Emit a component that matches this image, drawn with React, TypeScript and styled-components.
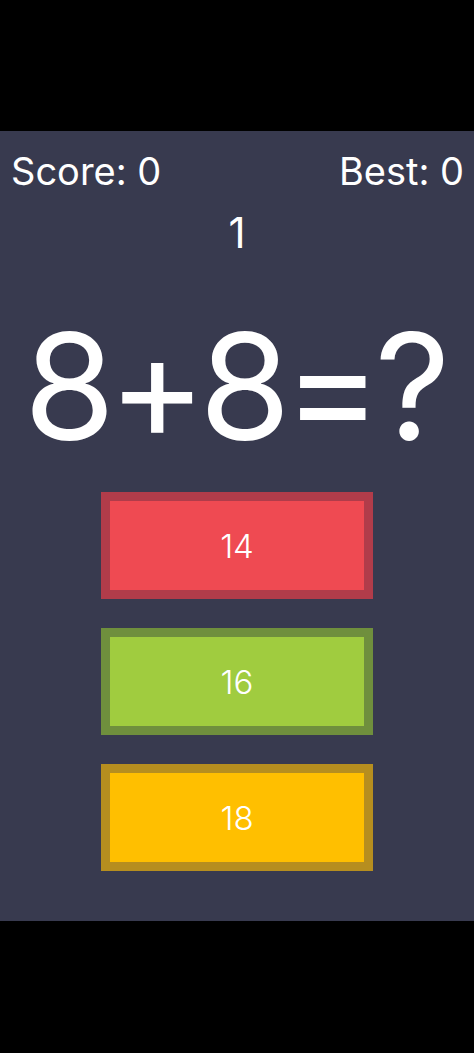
import styled, { createGlobalStyle } from "styled-components";

const GlobalStyle = createGlobalStyle`
  html, body {
    margin: 0;
    padding: 0;
    background: #000;
  }
  body {
    font-family: Inter, "Open Sans", sans-serif;
  }
`;

const answers = [
  { value: 14, fill: "#ef4a52", edge: "#b13c4a" },
  { value: 16, fill: "#a0cc3f", edge: "#6f8f3d" },
  { value: 18, fill: "#ffbf00", edge: "#b68e1f" },
];

export default function App() {
  return (
    <Screen>
      <GlobalStyle />
      <Game>
        <ScoreBar>
          <span>Score: 0</span>
          <span>Best: 0</span>
        </ScoreBar>
        <Level>1</Level>
        <Question>8+8=?</Question>
        <Answers>
          {answers.map((a) => (
            <AnswerButton key={a.value} $fill={a.fill} $edge={a.edge}>
              {a.value}
            </AnswerButton>
          ))}
        </Answers>
      </Game>
    </Screen>
  );
}

const Screen = styled.div`
  width: 474px;
  height: 1053px;
  padding-top: 131px;
  box-sizing: border-box;
  background: #000;
`;

const Game = styled.div`
  height: 790px;
  background: #383a4f;
  color: #fff;
  display: flex;
  flex-direction: column;
  align-items: center;
`;

const ScoreBar = styled.div`
  align-self: stretch;
  display: flex;
  justify-content: space-between;
  padding: 17px 10px 0 11px;
  font-size: 38px;
  line-height: 46px;
`;

const Level = styled.div`
  margin-top: 14px;
  font-size: 42px;
  line-height: 50px;
`;

const Question = styled.div`
  margin-top: 44px;
  font-size: 148px;
  line-height: 170px;
  letter-spacing: -7px;
  text-indent: -7px;
`;

const Answers = styled.div`
  margin-top: 20px;
  display: flex;
  flex-direction: column;
  gap: 29px;
`;

const AnswerButton = styled.button<{ $fill: string; $edge: string }>`
  width: 272px;
  height: 107px;
  box-sizing: border-box;
  border: 9px solid ${(p) => p.$edge};
  background: ${(p) => p.$fill};
  color: #fff;
  font-family: Inter, "Open Sans", sans-serif;
  font-size: 33px;
  font-weight: 300;
  padding: 0;
`;
